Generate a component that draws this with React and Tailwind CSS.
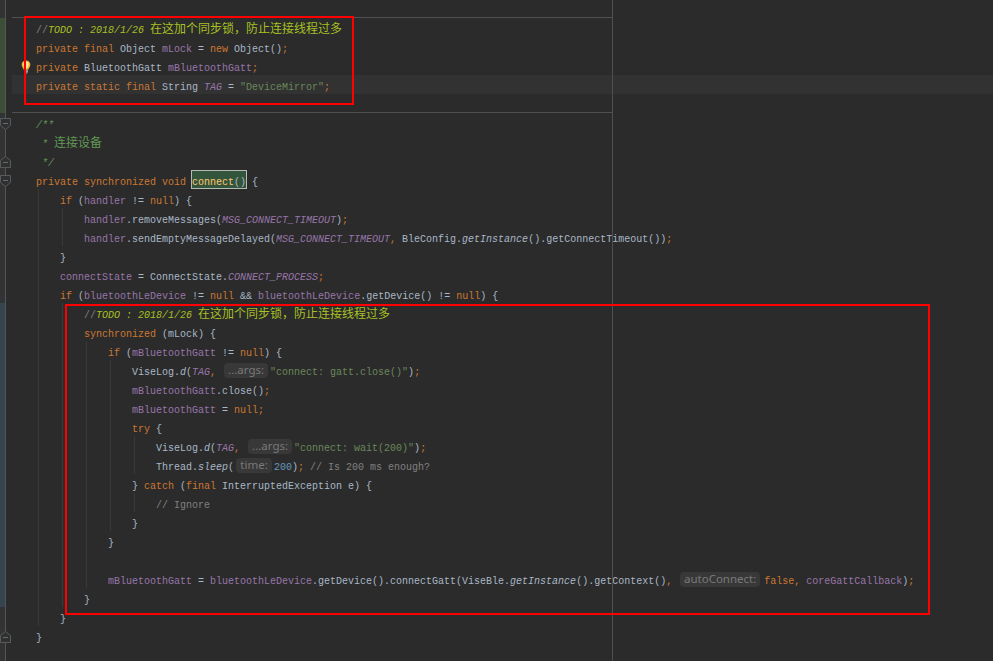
import React from 'react';

const tone = {
  k: 'text-[#cc7832]',
  i: 'text-[#a9b7c6]',
  f: 'text-[#9876aa]',
  fi: 'text-[#9876aa] italic',
  m: 'text-[#a9b7c6] italic',
  s: 'text-[#6a8759]',
  n: 'text-[#6897bb]',
  c: 'text-[#808080]',
  t: 'text-[#a8c023] italic',
  z: 'text-[#a8c023] text-[12px]',
  d: 'text-[#629755] italic',
  dz: 'text-[#629755] text-[12px]',
  y: 'text-[#ffc66d]',
};

const indent = {
  0: 'pl-[24px]',
  1: 'pl-[48px]',
  2: 'pl-[72px]',
  3: 'pl-[96px]',
  4: 'pl-[120px]',
  5: 'pl-[144px]',
};

const todo = [
  ['c', '//'],
  ['t', 'TODO : 2018/1/26 '],
  ['z', '在这加个同步锁，防止连接线程过多'],
];

// [indent, tokens, options]
const rows = [
  [0, todo, { vcs: 'add' }],
  [0, [['k', 'private final '], ['i', 'Object '], ['f', 'mLock'], ['i', ' = '], ['k', 'new '], ['i', 'Object()'], ['k', ';']], { vcs: 'add' }],
  [0, [['k', 'private '], ['i', 'BluetoothGatt '], ['f', 'mBluetoothGatt'], ['k', ';']], { vcs: 'add', bulb: true }],
  [0, [['k', 'private static final '], ['i', 'String '], ['fi', 'TAG'], ['i', ' = '], ['s', '"DeviceMirror"'], ['k', ';']], { vcs: 'add', active: true }],
  [0, [], { vcs: 'add', divider: true }],
  [0, [['d', '/**']], { fold: 'down' }],
  [0, [['d', ' * '], ['dz', '连接设备']]],
  [0, [['d', ' */']], { fold: 'up' }],
  [0, [['k', 'private synchronized void '], ['box', 'connect'], ['boxEnd', '()'], ['i', ' {']], { fold: 'down' }],
  [1, [['k', 'if '], ['i', '('], ['f', 'handler'], ['i', ' != '], ['k', 'null'], ['i', ') {']]],
  [2, [['f', 'handler'], ['i', '.removeMessages('], ['fi', 'MSG_CONNECT_TIMEOUT'], ['i', ')'], ['k', ';']]],
  [2, [['f', 'handler'], ['i', '.sendEmptyMessageDelayed('], ['fi', 'MSG_CONNECT_TIMEOUT'], ['k', ', '], ['i', 'BleConfig.'], ['m', 'getInstance'], ['i', '().getConnectTimeout())'], ['k', ';']]],
  [1, [['i', '}']]],
  [1, [['f', 'connectState'], ['i', ' = ConnectState.'], ['fi', 'CONNECT_PROCESS'], ['k', ';']]],
  [1, [['k', 'if '], ['i', '('], ['f', 'bluetoothLeDevice'], ['i', ' != '], ['k', 'null'], ['i', ' && '], ['f', 'bluetoothLeDevice'], ['i', '.getDevice() != '], ['k', 'null'], ['i', ') {']]],
  [2, todo, { vcs: 'mod' }],
  [2, [['k', 'synchronized '], ['i', '(mLock) {']], { vcs: 'mod' }],
  [3, [['k', 'if '], ['i', '('], ['f', 'mBluetoothGatt'], ['i', ' != '], ['k', 'null'], ['i', ') {']], { vcs: 'mod' }],
  [4, [['i', 'ViseLog.'], ['m', 'd'], ['i', '('], ['fi', 'TAG'], ['k', ','], ['hint', '...args:', 'w-[44px] ml-2 mr-[2px]'], ['s', '"connect: gatt.close()"'], ['i', ')'], ['k', ';']], { vcs: 'mod' }],
  [4, [['f', 'mBluetoothGatt'], ['i', '.close()'], ['k', ';']], { vcs: 'mod' }],
  [4, [['f', 'mBluetoothGatt'], ['i', ' = '], ['k', 'null;']], { vcs: 'mod' }],
  [4, [['k', 'try '], ['i', '{']], { vcs: 'mod' }],
  [5, [['i', 'ViseLog.'], ['m', 'd'], ['i', '('], ['fi', 'TAG'], ['k', ','], ['hint', '...args:', 'w-[44px] ml-2 mr-[2px]'], ['s', '"connect: wait(200)"'], ['i', ')'], ['k', ';']], { vcs: 'mod' }],
  [5, [['i', 'Thread.'], ['m', 'sleep'], ['i', '('], ['hint', 'time:', 'w-[36px] ml-[2px] mr-[2px]'], ['n', '200'], ['i', ')'], ['k', ';'], ['c', ' // Is 200 ms enough?']], { vcs: 'mod' }],
  [4, [['i', '} '], ['k', 'catch '], ['i', '('], ['k', 'final '], ['i', 'InterruptedException e) {']], { vcs: 'mod' }],
  [5, [['c', '// Ignore']], { vcs: 'mod' }],
  [4, [['i', '}']], { vcs: 'mod' }],
  [3, [['i', '}']], { vcs: 'mod' }],
  [3, [], { vcs: 'mod' }],
  [3, [['f', 'mBluetoothGatt'], ['i', ' = '], ['f', 'bluetoothLeDevice'], ['i', '.getDevice().connectGatt(ViseBle.'], ['m', 'getInstance'], ['i', '().getContext()'], ['k', ','], ['hint', 'autoConnect:', 'w-[80px] ml-2 mr-1'], ['k', 'false'], ['k', ', '], ['f', 'coreGattCallback'], ['i', ')'], ['k', ';']], { vcs: 'mod' }],
  [2, [['i', '}']], { vcs: 'mod' }],
  [1, [['i', '}']]],
  [0, [['i', '}']], { fold: 'up' }],
];

// indent guides drawn over the code
const guides = [
  'left-[38px] top-[189px] h-[437px]',
  'left-[62px] top-[208px] h-[38px]',
  'left-[62px] top-[303px] h-[304px]',
  'left-[86px] top-[341px] h-[247px]',
  'left-[110px] top-[360px] h-[171px]',
  'left-[134px] top-[436px] h-[38px]',
  'left-[134px] top-[493px] h-[19px]',
];

function FoldIcon({ dir }) {
  const shape = dir === 'down' ? 'M0.5 0.5H10.5V7.5L5.5 11.5L0.5 7.5Z' : 'M5.5 0.5L10.5 4.5V11.5H0.5V4.5Z';
  const dash = dir === 'down' ? 'M3 5.5H8' : 'M3 6.5H8';
  return (
    <svg width="11" height="12" viewBox="0 0 11 12" fill="none" className="absolute left-0 top-[5px]">
      <path d={shape} fill="#2f3031" stroke="#5a5a5a" />
      <path d={dash} stroke="#6a6a6a" />
    </svg>
  );
}

function Bulb() {
  return (
    <svg width="10" height="15" viewBox="0 0 12 18" className="absolute left-[9px] top-[4px]">
      <path d="M6 0.5C2.8 0.5 0.8 2.8 0.8 5.6C0.8 8 2.6 9.2 3.4 11.6H8.6C9.4 9.2 11.2 8 11.2 5.6C11.2 2.8 9.2 0.5 6 0.5Z" fill="#f2b43c" />
      <path d="M6 1.8C4 1.8 2.6 3.4 2.6 5.4C2.6 7 3.8 8 4.6 10H7.4C8.2 8 9.4 7 9.4 5.4C9.4 3.4 8 1.8 6 1.8Z" fill="#ffe39a" />
      <rect x="3.6" y="12" width="4.8" height="3.4" rx="0.6" fill="#9a9a9a" />
      <rect x="4.6" y="15.6" width="2.8" height="1.4" fill="#6d6d6d" />
    </svg>
  );
}

function Token({ token }) {
  const [kind, text, extra] = token;
  if (kind === 'hint') {
    return (
      <span className={`inline-block h-[15px] align-[1px] rounded-[4px] bg-[#383838] text-center font-['Noto_Sans',sans-serif] text-[11.5px] leading-[14px] text-[#787878] ${extra}`}>
        {text}
      </span>
    );
  }
  if (kind === 'box') {
    return <span className="-ml-px inline-block h-[19px] border-y border-l border-[#b4bab4] bg-[#33553c] leading-[23px] text-[#ffc66d]">{text}</span>;
  }
  if (kind === 'boxEnd') {
    return <span className="-mr-px inline-block h-[19px] border-y border-r border-[#b4bab4] bg-[#33553c] leading-[23px] text-[#a9b7c6]">{text}</span>;
  }
  return <span className={tone[kind]}>{text}</span>;
}

function Row({ level, tokens, opts = {} }) {
  const strip = opts.vcs === 'add' ? 'bg-[#3a4f36]' : opts.vcs === 'mod' ? 'bg-[#34454f]' : 'bg-[#313335]';
  return (
    <div className="flex h-[19px]">
      <div className="relative flex w-[12px] shrink-0">
        <div className={`w-[5px] ${strip}`} />
        <div className="w-px bg-[#555555]" />
        {opts.fold && <FoldIcon dir={opts.fold} />}
      </div>
      <div className={`relative flex-1 whitespace-pre leading-[25px] ${indent[level]} ${opts.active ? 'bg-[#323232]' : ''}`}>
        {opts.bulb && <Bulb />}
        {tokens.map((t, i) => (
          <Token key={i} token={t} />
        ))}
        {opts.divider && <div className="absolute bottom-0 left-0 h-px w-[600px] bg-[#505050]" />}
      </div>
    </div>
  );
}

export default function App() {
  return (
    <div className="relative h-[661px] w-[993px] overflow-hidden bg-[#2b2b2b] font-['Liberation_Mono','Noto_Sans_CJK_SC',monospace] text-[10px]">
      <div className="flex h-[18px]">
        <div className="flex w-[12px] shrink-0">
          <div className="w-[5px] bg-[#313335]" />
          <div className="w-px bg-[#555555]" />
        </div>
        <div className="h-[18px] w-[600px] border-b border-[#505050]" />
      </div>

      {rows.map(([level, tokens, opts], i) => (
        <Row key={i} level={level} tokens={tokens} opts={opts} />
      ))}
      <Row level={0} tokens={[]} />

      {/* right margin */}
      <div className="absolute left-[612px] top-0 h-full w-px bg-[#4f4f4f]" />

      {guides.map((g) => (
        <div key={g} className={`absolute w-px bg-[#3a3a3a] ${g}`} />
      ))}

      {/* red annotation boxes */}
      <div className="absolute left-[24px] top-[16px] h-[89px] w-[330px] border-2 border-[#ff0000]" />
      <div className="absolute left-[65px] top-[304px] h-[311px] w-[865px] border-2 border-[#ff0000]" />
    </div>
  );
}
